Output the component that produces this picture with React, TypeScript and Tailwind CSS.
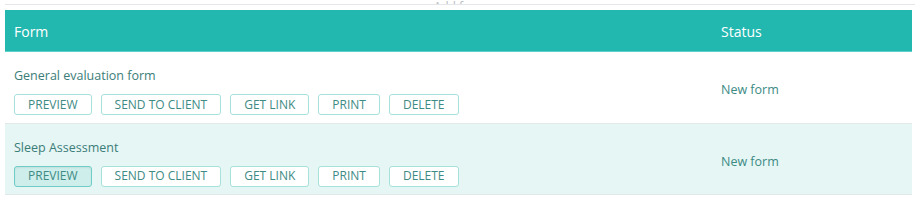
import React from "react";

const FONT = { fontFamily: '"Open Sans", "Liberation Sans", sans-serif' };

const ACTIONS = ["Preview", "Send to client", "Get link", "Print", "Delete"];

interface FormRow {
  name: string;
  status: string;
  active?: boolean;
}

const ROWS: FormRow[] = [
  { name: "General evaluation form", status: "New form" },
  { name: "Sleep Assessment", status: "New form", active: true },
];

export default function App() {
  return (
    <div className="w-[920px] h-[202px] bg-white overflow-hidden" style={FONT}>
      {/* cut-off caption above the table */}
      <div className="h-[5px] overflow-hidden flex justify-center items-end border-b border-[#e4e6ea] mx-[5px]">
        <span className="text-[12px] leading-[12px] text-[#b7bcc2] -mb-[9px]">Add form</span>
      </div>

      <div className="mt-[5px] w-[907px] ml-[5px]">
        {/* Header */}
        <div className="h-[42px] bg-[#22b8b0] flex items-center text-white text-[14px] border-b border-[#5fd0c9]">
          <div className="flex-1 pl-[9px] pt-[2px]">Form</div>
          <div className="w-[191px] pt-[2px]">Status</div>
        </div>

        {ROWS.map((r) => (
          <div
            key={r.name}
            className={`flex items-center border-b border-[#e2e8e8] pt-[6px] ${r.active ? "bg-[#e6f6f5] h-[71px]" : "bg-white h-[72px]"}`}
          >
            <div className="flex-1 pl-[9px]">
              <div className="text-[12.5px] text-[#3b7d78] leading-[16px] mb-[10px] pt-[2px]">{r.name}</div>
              <div className="flex gap-[9px]">
                {ACTIONS.map((a, i) => {
                  const on = r.active && i === 0;
                  return (
                    <button
                      key={a}
                      type="button"
                      className={`h-[21px] px-[13px] rounded-[3px] border text-[12px] uppercase text-[#3e8a84] leading-none ${
                        on
                          ? "bg-[#cdeeeb] border-[#6fcdc5] shadow-[inset_0_1px_2px_rgba(0,0,0,0.06)]"
                          : "bg-white border-[#a6e1db]"
                      }`}
                    >
                      {a}
                    </button>
                  );
                })}
              </div>
            </div>
            <div className="w-[191px] text-[12.5px] text-[#3b8a84]">{r.status}</div>
          </div>
        ))}
      </div>
    </div>
  );
}
